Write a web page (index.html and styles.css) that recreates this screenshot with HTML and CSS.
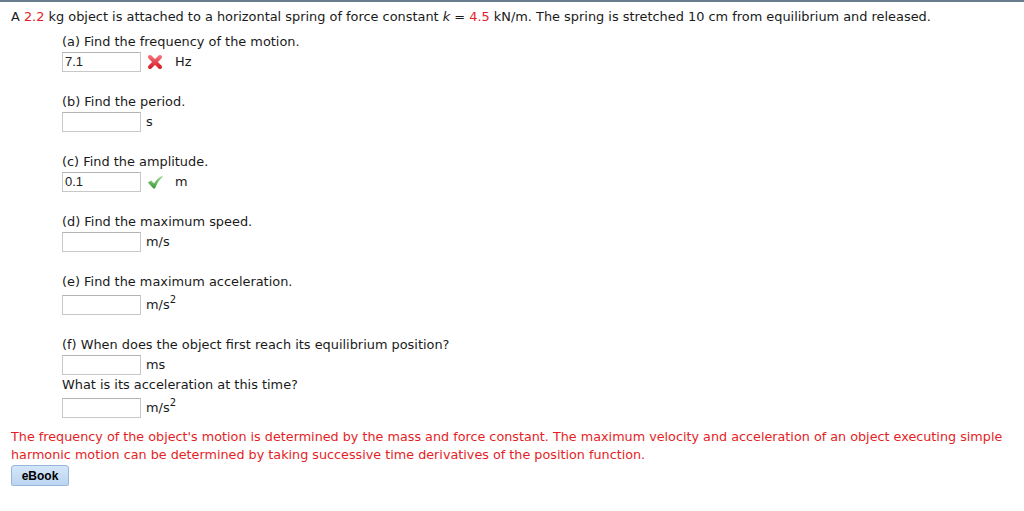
FILE: index.html
```html
<!DOCTYPE html>
<html>
<head>
<meta charset="utf-8">
<link rel="stylesheet" href="styles.css">
</head>
<body>
<div class="page">
  <div class="question">
    <p class="stem">A <span class="num">2.2</span> kg object is attached to a horizontal spring of force constant <i>k</i> = <span class="num">4.5</span> kN/m. The spring is stretched 10 cm from equilibrium and released.</p>
    <div class="parts">
      <div class="part">
        <div class="label">(a) Find the frequency of the motion.</div>
        <div class="answer"><span class="box">7.1</span><span class="mark">
          <svg width="16" height="16" viewBox="0 0 16 16"><defs><linearGradient id="rg" x1="0" y1="0" x2="0" y2="1"><stop offset="0" stop-color="#f36a72"/><stop offset="1" stop-color="#d9232f"/></linearGradient></defs><path d="M3 3 L13 13 M13 3 L3 13" stroke="url(#rg)" stroke-width="4" stroke-linecap="round"/></svg>
        </span><span class="unit">Hz</span></div>
      </div>
      <div class="part">
        <div class="label">(b) Find the period.</div>
        <div class="answer"><span class="box"></span><span class="unit">s</span></div>
      </div>
      <div class="part">
        <div class="label">(c) Find the amplitude.</div>
        <div class="answer"><span class="box">0.1</span><span class="mark">
          <svg width="16" height="16" viewBox="0 0 16 16"><defs><linearGradient id="gg" x1="0" y1="0" x2="0" y2="1"><stop offset="0" stop-color="#a2dc98"/><stop offset="1" stop-color="#3c9838"/></linearGradient></defs><path d="M0.8 8.6 L4.2 6.4 L7 9.6 C9 6.2 11.6 3.6 15.2 1.8 L15.6 3 C12.4 5.6 9.8 9.6 8 14.4 L6.4 14.4 Z" fill="url(#gg)"/></svg>
        </span><span class="unit">m</span></div>
      </div>
      <div class="part">
        <div class="label">(d) Find the maximum speed.</div>
        <div class="answer"><span class="box"></span><span class="unit">m/s</span></div>
      </div>
      <div class="part">
        <div class="label">(e) Find the maximum acceleration.</div>
        <div class="answer tall"><span class="box"></span><span class="unit">m/s<sup>2</sup></span></div>
      </div>
      <div class="part">
        <div class="label">(f) When does the object first reach its equilibrium position?</div>
        <div class="answer"><span class="box"></span><span class="unit">ms</span></div>
        <div class="label">What is its acceleration at this time?</div>
        <div class="answer tall"><span class="box"></span><span class="unit">m/s<sup>2</sup></span></div>
      </div>
    </div>
    <p class="feedback">The frequency of the object's motion is determined by the mass and force constant. The maximum velocity and acceleration of an object executing simple harmonic motion can be determined by taking successive time derivatives of the position function.</p>
    <button class="ebook" type="button">eBook</button>
  </div>
</div>
</body>
</html>
```
FILE: styles.css
```css
html, body {
  margin: 0;
  padding: 0;
  background: #ffffff;
}
.page {
  border-top: 2px solid #687c8d;
  font-family: "DejaVu Sans", Verdana, sans-serif;
  font-size: 12.9px;
  color: #1a1a1a;
}
.question {
  padding: 5px 11px 0 11px;
}
.stem {
  margin: 0;
  line-height: 20px;
}
.num {
  color: #e41e26;
}
.parts {
  padding-left: 51px;
  margin-top: 5px;
  display: flex;
  flex-direction: column;
  gap: 20px;
}
.label {
  line-height: 20px;
}
.answer {
  display: flex;
  align-items: flex-end;
  line-height: 20px;
}
.answer.tall {
  padding-top: 3px;
}
.box {
  box-sizing: border-box;
  width: 79px;
  height: 20px;
  border: 1px solid #c8c8c8;
  border-top-color: #b4b4b4;
  font-family: "Liberation Sans", Arial, sans-serif;
  font-size: 13px;
  line-height: 18px;
  padding-left: 2px;
  color: #222;
  flex: none;
}
.mark {
  display: flex;
  align-items: center;
  height: 20px;
  margin-left: 6px;
  margin-right: 12px;
}
.unit {
  margin-left: 5px;
}
.mark + .unit {
  margin-left: 0;
}
.unit sup {
  font-size: 10px;
  line-height: 0;
  vertical-align: 6px;
}
.feedback {
  margin: 10px 0 0 0;
  color: #e41e26;
  font-size: 12.78px;
  line-height: 18px;
}
.ebook {
  display: block;
  margin-top: 1px;
  width: 58px;
  height: 21px;
  border: 1px solid #96b6dc;
  border-radius: 3px;
  background: linear-gradient(#d3e5f8, #bcd5f1);
  font-family: "Liberation Sans", Arial, sans-serif;
  font-weight: bold;
  font-size: 12px;
  color: #000;
  padding: 0;
  box-shadow: 0 1px 0 #a9bfd8;
}
```
